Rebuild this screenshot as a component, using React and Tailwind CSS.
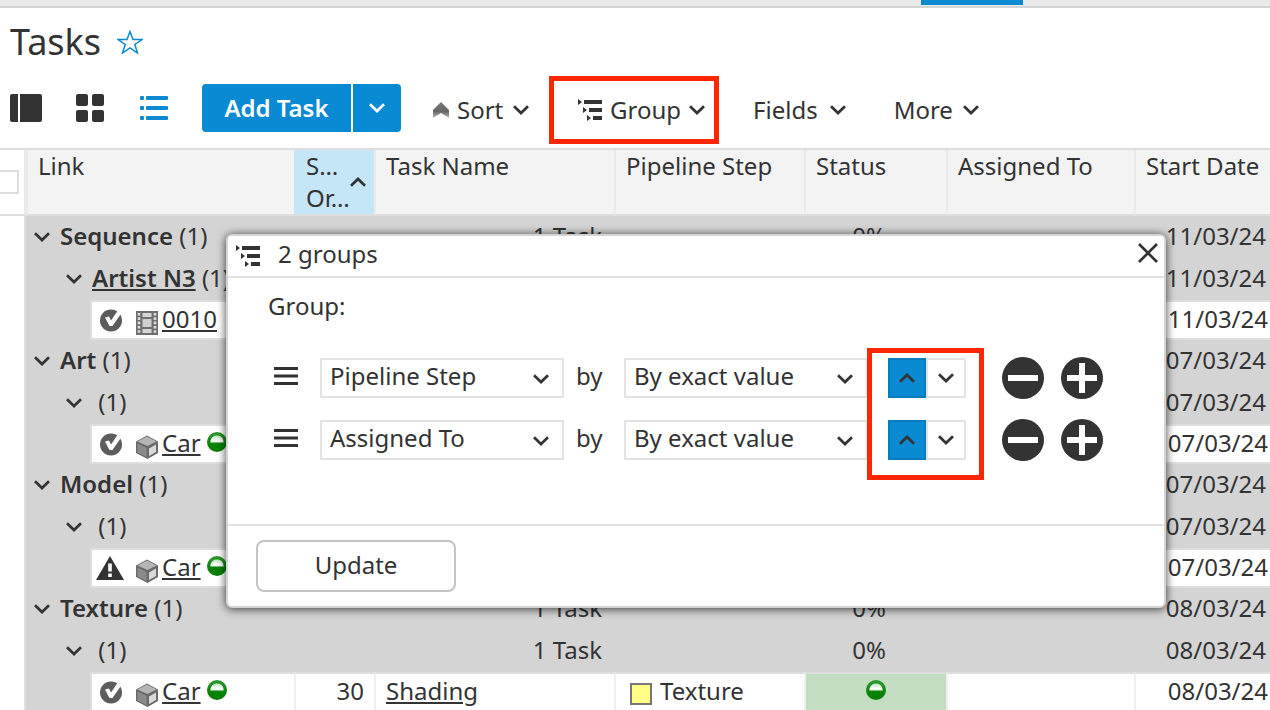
import React, { useState } from "react";

const groups = [
  { name: "Sequence", sub: "Artist N3", count: "1 Task", done: "0%", icon: "check", type: "film", link: "0010", date: "11/03/24" },
  { name: "Art", sub: "", icon: "check", type: "cube", link: "Car", date: "07/03/24" },
  { name: "Model", sub: "", icon: "warning", type: "cube", link: "Car", date: "07/03/24" },
  {
    name: "Texture",
    sub: "",
    count: "1 Task",
    done: "0%",
    icon: "check",
    type: "cube",
    link: "Car",
    date: "08/03/24",
    order: 30,
    task: "Shading",
    step: "Texture",
  },
];

function Chevron({ up }) {
  return (
    <svg viewBox="0 0 16 10" className={`w-4 h-[10px] shrink-0 ${up ? "rotate-180" : ""}`} fill="none">
      <path d="M1 1.2L8 8L15 1.2" stroke="currentColor" strokeWidth="2.7" />
    </svg>
  );
}

function GroupIcon() {
  return (
    <svg viewBox="0 0 24 22" className="w-6 h-[22px] shrink-0" fill="currentColor">
      <path d="M6 1h18v4H6zM11 9h13v4H11zM15 17h9v4h-9z" />
      <path d="M0 0l4 3-4 3zM5 8l4 3-4 3zM9 16l4 3-4 3z" />
    </svg>
  );
}

function StatusBall() {
  return (
    <svg viewBox="0 0 20 20" className="w-5 h-5 shrink-0">
      <defs>
        <linearGradient id="ball" x1="0" y1="0" x2="0" y2="1">
          <stop offset="0" stopColor="#2f9a2f" />
          <stop offset="0.6" stopColor="#078407" />
          <stop offset="1" stopColor="#067d06" />
        </linearGradient>
        <linearGradient id="shine" x1="0" y1="0" x2="0" y2="1">
          <stop offset="0" stopColor="#b9e2b9" />
          <stop offset="0.7" stopColor="#ffffff" />
          <stop offset="1" stopColor="#e4f4e4" />
        </linearGradient>
      </defs>
      <circle cx="10" cy="10" r="10" fill="url(#ball)" />
      <path d="M3.4 10.5C3.4 5.8 6.2 3.4 10 3.4s6.600 2.400 6.600 7.100z" fill="url(#shine)" />
    </svg>
  );
}

function RowIcon({ kind }) {
  if (kind === "warning") {
    return (
      <svg viewBox="0 0 28 24" className="w-7 h-6 shrink-0">
        <path d="M14 0L28 24H0z" fill="#333" />
        <path d="M12.200 7.500h3.600v8h-3.600zM12.200 17.500h3.600v3.500h-3.600z" fill="#fff" />
      </svg>
    );
  }
  return (
    <svg viewBox="0 0 28 24" className="w-7 h-6 shrink-0">
      <circle cx="15" cy="12.500" r="11" fill="#5c5c5c" />
      <path d="M9 9.500l4-1 2 4L22.500 1.500l3 3.500L16.500 18h-3z" fill="#fff" />
    </svg>
  );
}

function TypeIcon({ kind }) {
  if (kind === "film") {
    return (
      <svg viewBox="0 0 22 24" className="w-[22px] h-6 shrink-0">
        <rect width="22" height="24" fill="#6f6f6f" />
        <rect x="6.500" y="2" width="9" height="4" fill="#d6d6d6" />
        <rect x="6.500" y="8" width="9" height="8" fill="#cfcfcf" />
        <rect x="6.500" y="18" width="9" height="4" fill="#d6d6d6" />
        <path d="M3 2v20M19 2v20" stroke="#ddd" strokeWidth="2.600" strokeDasharray="2.600 1.700" />
      </svg>
    );
  }
  return (
    <svg viewBox="0 0 22 24" className="w-[22px] h-6 shrink-0">
      <path d="M11 0.500L22 6.500v11.500L11.500 24L0 18V6.500z" fill="#6b6b6b" />
      <path d="M11 1.500L20.500 6.500L11.500 11L1.500 6.500z" fill="#b5b5b5" />
      <path d="M1.500 8.500L10.500 13V22L1.500 17.500z" fill="#8b8b8b" />
      <path d="M13 13.500L20 9.500V17L13 21z" fill="#d9d9d9" />
    </svg>
  );
}

function GroupRow({ group, nested }) {
  const label = nested ? group.sub : group.name;
  return (
    <tr className="h-[42px] bg-[#d4d4d4]">
      <td className="bg-white border-r-2 border-[#dedede]"></td>
      <td colSpan={2} className="p-0">
        <div className={`flex items-center gap-[10px] ${nested ? "pl-10" : "pl-2"}`}>
          <Chevron />
          <span className="whitespace-pre pb-[2px]">
            {label && <span className={nested ? "font-semibold underline" : "font-semibold"}>{label}</span>}
            {" (1)"}
          </span>
        </div>
      </td>
      <td className="p-0 pr-[14px] pb-[2px] text-right">{group.count}</td>
      <td></td>
      <td className="p-0 pr-4 pb-[2px] text-center">{group.done}</td>
      <td></td>
      <td className="p-0 pr-1 pb-[2px] text-right">{group.date}</td>
    </tr>
  );
}

function TaskRow({ group }) {
  const cell = "p-0 pb-[2px] border-y-2 border-r-2 border-y-[#dedede] border-r-[#f0f0f0]";
  return (
    <tr className="h-10 bg-white">
      <td className="border-r-2 border-[#dedede]"></td>
      <td className="p-0 pl-16 bg-[#d4d4d4]">
        <div className="flex items-center h-10 pl-1 bg-white border-y-2 border-l-2 border-r-2 border-y-[#dedede] border-l-[#dedede] border-r-[#f0f0f0]">
          <RowIcon kind={group.icon} />
          <span className="pl-3 pt-[6px]">
            <TypeIcon kind={group.type} />
          </span>
          <a href="#" className="pl-1 pr-[6px] pb-[2px] underline">{group.link}</a>
          {group.type === "cube" && (
            <span className="pb-1">
              <StatusBall />
            </span>
          )}
        </div>
      </td>
      <td className={`${cell} pr-[10px] text-right`}>{group.order}</td>
      <td className={`${cell} pl-[10px]`}>
        {group.task && <a href="#" className="underline">{group.task}</a>}
      </td>
      <td className={`${cell} pl-[14px]`}>
        {group.step && (
          <div className="flex items-center gap-2">
            <span className="w-[22px] h-[22px] mt-[6px] border-2 border-[#777] bg-[#ffff88]"></span>
            {group.step}
          </div>
        )}
      </td>
      <td className="p-0 pb-1 border-y-2 border-r-2 border-y-[#dedede] border-r-[#f0f0f0] bg-[#c3ddc2]">
        <div className="flex justify-center">
          <StatusBall />
        </div>
      </td>
      <td className={cell}></td>
      <td className="p-0 pr-[2px] pb-[2px] border-y-2 border-[#dedede] text-right">{group.date}</td>
    </tr>
  );
}

function SelectBox({ label, value, options }) {
  return (
    <div className="relative w-[244px]">
      <select
        aria-label={label}
        defaultValue={value}
        className="appearance-none w-full h-10 pl-2 pb-1 border-2 border-[#e4e4e4] bg-white leading-8"
      >
        {options.map((o) => (
          <option key={o}>{o}</option>
        ))}
      </select>
      <span className="absolute right-[15px] top-4 pointer-events-none">
        <Chevron />
      </span>
    </div>
  );
}

function GroupLine({ field }) {
  const [dir, setDir] = useState("asc");
  return (
    <div className="flex items-center h-10">
      <svg viewBox="0 0 24 18" className="w-6 h-[18px] mb-1" fill="#333">
        <path d="M0 0h24v3H0zM0 7.500h24v3H0zM0 15h24v3H0z" />
      </svg>
      <div className="pl-[22px]">
        <SelectBox label="Field" value={field} options={["Pipeline Step", "Assigned To"]} />
      </div>
      <span className="w-[60px] pl-3 pb-1">by</span>
      <SelectBox label="Grouping" value="By exact value" options={["By exact value"]} />
      <div className="flex ml-5">
        <button
          aria-label="Ascending"
          onClick={() => setDir("asc")}
          className={`flex items-center justify-center w-[38px] h-10 border-2 ${
            dir === "asc" ? "bg-[#0a8ad2] border-[#0a7bbb]" : "bg-white border-[#e4e4e4]"
          }`}
        >
          <Chevron up />
        </button>
        <button
          aria-label="Descending"
          onClick={() => setDir("desc")}
          className={`flex items-center justify-center w-10 h-10 border-2 ${
            dir === "desc" ? "bg-[#0a8ad2] border-[#0a7bbb]" : "bg-white border-[#e4e4e4]"
          }`}
        >
          <Chevron />
        </button>
      </div>
      <div className="flex gap-[17px] ml-9">
        <button aria-label="Remove">
          <svg viewBox="0 0 42 42" className="block w-[42px] h-[42px]">
            <circle cx="21" cy="21" r="21" fill="#333" />
            <path d="M6 18h30v6H6z" fill="#fff" />
          </svg>
        </button>
        <button aria-label="Add">
          <svg viewBox="0 0 42 42" className="block w-[42px] h-[42px]">
            <circle cx="21" cy="21" r="21" fill="#333" />
            <path d="M6 18h30v6H6zM18 6h6v30h-6z" fill="#fff" />
          </svg>
        </button>
      </div>
    </div>
  );
}

function GroupDialog({ onClose }) {
  return (
    <div
      role="dialog"
      aria-label="2 groups"
      className="absolute left-[226px] right-[104px] top-[234px] bg-white border-2 border-[#d4d4d4] rounded-md shadow-[0_1px_10px_rgba(0,0,0,0.75)]"
    >
      {/* Title */}
      <div className="flex items-center h-[42px] pl-2 pr-[6px] border-b-2 border-[#e4e4e4]">
        <GroupIcon />
        <span className="flex-1 pl-[18px] pb-1">2 groups</span>
        <button aria-label="Close" onClick={onClose} className="pb-[6px]">
          <svg viewBox="0 0 20 20" className="block w-5 h-5" fill="none">
            <path d="M1 1L19 19M19 1L1 19" stroke="#333" strokeWidth="2.700" />
          </svg>
        </button>
      </div>

      {/* Group rules */}
      <div className="h-[248px] pt-3 border-b-2 border-[#e4e4e4]">
        <div className="pl-10 leading-8">Group:</div>
        <div className="relative flex flex-col gap-[22px] mt-9 pl-[46px]">
          <GroupLine field="Pipeline Step" />
          <GroupLine field="Assigned To" />
          <div className="absolute left-[639px] -top-[10px] w-[117px] h-[132px] border-[5px] border-[#ff2600] pointer-events-none"></div>
        </div>
      </div>

      {/* Footer */}
      <div className="px-7 py-[14px]">
        <button className="block w-[200px] h-[52px] pb-[2px] border-2 border-[#c4c4c4] rounded-lg">Update</button>
      </div>
    </div>
  );
}

export default function App() {
  const [open, setOpen] = useState(true);
  const head = "p-0 pl-[10px] border-r-2 border-[#eaeaea] font-normal align-top";

  return (
    <div className="relative h-screen overflow-hidden bg-white text-[#333] text-2xl leading-8 font-['Noto_Sans',sans-serif]">
      {/* Top navigation edge */}
      <div className="flex justify-end h-2 pr-[247px] bg-[#eaeaea] border-b-2 border-[#d4d4d4]">
        <div className="w-[102px] h-[5px] bg-[#0a8ad2]"></div>
      </div>

      {/* Page title */}
      <div className="flex items-center gap-4 h-[68px] pl-[10px]">
        <h1 className="text-4xl">Tasks</h1>
        <button aria-label="Favourite">
          <svg viewBox="0 0 26 24" className="block w-[26px] h-6" fill="none">
            <path
              d="M13 1.500L16 9.500H25L17.800 14.500L20.500 23L13 18L5.500 23L8.200 14.500L1 9.500H10z"
              stroke="#0a8ad2"
              strokeWidth="1.500"
            />
          </svg>
        </button>
      </div>

      {/* Toolbar */}
      <div className="flex items-center h-[72px] pl-[10px] pb-2">
        <button aria-label="Detail view">
          <svg viewBox="0 0 32 28" className="block w-8 h-7" fill="#333">
            <path d="M2 0H8V28H2Q0 28 0 26V2Q0 0 2 0zM10 0H30Q32 0 32 2V26Q32 28 30 28H10z" />
          </svg>
        </button>
        <button aria-label="Thumbnail view" className="ml-[34px]">
          <svg viewBox="0 0 28 28" className="block w-7 h-7" fill="#333">
            <rect width="12" height="12" rx="2" />
            <rect x="16" width="12" height="12" rx="2" />
            <rect y="16" width="12" height="12" rx="2" />
            <rect x="16" y="16" width="12" height="12" rx="2" />
          </svg>
        </button>
        <button aria-label="List view" className="ml-9">
          <svg viewBox="0 0 28 24" className="block w-7 h-6" fill="#0a8ad2">
            <rect width="4" height="4" rx="1" />
            <rect x="6" width="22" height="4" rx="1" />
            <rect y="10" width="4" height="4" rx="1" />
            <rect x="6" y="10" width="22" height="4" rx="1" />
            <rect y="20" width="4" height="4" rx="1" />
            <rect x="6" y="20" width="22" height="4" rx="1" />
          </svg>
        </button>
        <div className="flex gap-[2px] ml-[34px] text-white">
          <button className="w-[149px] h-12 bg-[#0a8ad2] rounded-l font-semibold">Add Task</button>
          <button aria-label="More add options" className="flex items-center justify-center w-12 h-12 bg-[#0a8ad2] rounded-r">
            <Chevron />
          </button>
        </div>

        <button className="flex items-center w-[148px] pl-8 pt-1">
          <svg viewBox="0 0 16 16" className="w-4 h-4" fill="none">
            <defs>
              <linearGradient id="sort" x1="0" y1="0" x2="0" y2="1">
                <stop offset="0" stopColor="#777" />
                <stop offset="0.6" stopColor="#666" />
                <stop offset="1" stopColor="#bbb" />
              </linearGradient>
            </defs>
            <path d="M8 0L16 8V16L8 11L0 16V8z" fill="url(#sort)" />
          </svg>
          <span className="pl-2 pr-[10px]">Sort</span>
          <Chevron />
        </button>
        <button
          onClick={() => setOpen(!open)}
          className="flex items-center w-[170px] h-[68px] mt-1 pl-6 border-[5px] border-[#ff2600]"
        >
          <GroupIcon />
          <span className="px-2">Group</span>
          <Chevron />
        </button>
        <button className="flex items-center gap-3 ml-[34px] pt-1">
          Fields
          <Chevron />
        </button>
        <button className="flex items-center gap-[10px] ml-12 pt-1">
          More
          <Chevron />
        </button>
      </div>

      {/* Task grid */}
      <table className="w-full table-fixed border-separate border-spacing-0 border-t-2 border-[#dedede] whitespace-nowrap">
        <colgroup>
          <col className="w-[26px]" />
          <col className="w-[270px]" />
          <col className="w-[80px]" />
          <col className="w-[240px]" />
          <col className="w-[190px]" />
          <col className="w-[142px]" />
          <col className="w-[188px]" />
          <col />
        </colgroup>
        <thead>
          <tr className="h-[66px] bg-[#f3f3f3] text-left *:border-b-2 *:border-b-[#dedede]">
            <th className="p-0 bg-white border-r-2 border-[#eaeaea]">
              <input
                type="checkbox"
                aria-label="Select all"
                className="block appearance-none w-[19px] h-6 border-2 border-l-0 border-[#dedede]"
              />
            </th>
            <th className="p-0 pl-[10px] border-l-2 border-r-2 border-l-[#eaeaea] border-r-[#c5e6f7] font-normal align-top">Link</th>
            <th className="p-0 pl-[10px] border-r-2 border-[#eaeaea] bg-[#c5e6f7] font-normal">
              <div className="flex items-center justify-between pr-[10px]">
                <span>
                  S…
                  <br />
                  Or…
                </span>
                <Chevron up />
              </div>
            </th>
            <th className={head}>Task Name</th>
            <th className={head}>Pipeline Step</th>
            <th className={head}>Status</th>
            <th className={head}>Assigned To</th>
            <th className="p-0 pl-[10px] font-normal align-top">Start Date</th>
          </tr>
        </thead>
        <tbody>
          {groups.map((group) => (
            <React.Fragment key={group.name}>
              <GroupRow group={group} />
              <GroupRow group={group} nested />
              <TaskRow group={group} />
            </React.Fragment>
          ))}
        </tbody>
      </table>

      {open && <GroupDialog onClose={() => setOpen(false)} />}
    </div>
  );
}
